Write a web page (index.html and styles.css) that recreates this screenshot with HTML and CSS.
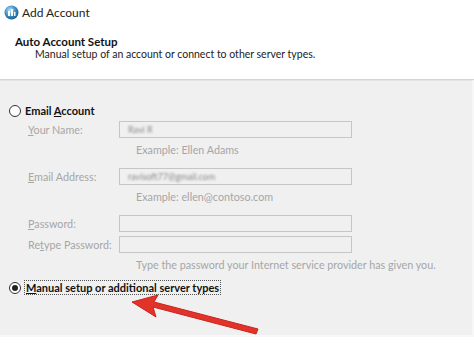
FILE: index.html
```html
<!DOCTYPE html>
<html lang="en">
<head>
    <meta charset="UTF-8">
    <title>Add Account</title>
    <link rel="stylesheet" href="styles.css">
</head>
<body>
    <div class="window">
        <!-- Title + header -->
        <div class="header">
            <div class="title">
                <svg class="app-icon" width="15" height="15" viewBox="0 0 15 15">
                    <defs>
                        <radialGradient id="g" cx="40%" cy="35%" r="65%">
                            <stop offset="0" stop-color="#bfe3f5"/>
                            <stop offset="0.6" stop-color="#3b8fc4"/>
                            <stop offset="1" stop-color="#1d5f8f"/>
                        </radialGradient>
                    </defs>
                    <circle cx="7.5" cy="7.5" r="7" fill="url(#g)"/>
                    <rect x="4" y="6" width="2" height="5" fill="#fff"/>
                    <rect x="7" y="4" width="2" height="7" fill="#fff"/>
                    <rect x="10" y="7" width="1.5" height="4" fill="#e9f4fb"/>
                </svg>
                <span>Add Account</span>
            </div>
            <div class="setup-title">Auto Account Setup</div>
            <div class="setup-desc">Manual setup of an account or connect to other server types.</div>
        </div>

        <div class="content">
            <label class="radio-row">
                <span class="radio"></span>
                <span class="radio-label">Email <u>A</u>ccount</span>
            </label>

            <div class="form">
                <span class="field-label"><u>Y</u>our Name:</span>
                <div class="input"><span class="blurred">Ravi R</span></div>
                <span></span>
                <span class="hint">Example: Ellen Adams</span>

                <span class="field-label field-gap"><u>E</u>mail Address:</span>
                <div class="input field-gap"><span class="blurred">ravisoft77@gmail.com</span></div>
                <span></span>
                <span class="hint">Example: ellen@contoso.com</span>

                <span class="field-label field-gap"><u>P</u>assword:</span>
                <div class="input field-gap"></div>
                <span class="field-label retype">Re<u>t</u>ype Password:</span>
                <div class="input retype"></div>
                <span></span>
                <span class="hint">Type the password your Internet service provider has given you.</span>
            </div>

            <label class="radio-row manual-row">
                <span class="radio checked"></span>
                <span class="radio-label focused"><u>M</u>anual setup or additional server types</span>
            </label>
        </div>

        <!-- annotation arrow -->
        <svg class="arrow" width="474" height="344" viewBox="0 0 474 344">
            <path d="M256 334 L153 307 L156 317 L132 302 L158 295 L154 302 L258 329 Z" fill="#e2332b" stroke="#c9241d" stroke-width="1" stroke-linejoin="round"/>
        </svg>
    </div>
</body>
</html>
```

FILE: styles.css
```css
body {
    margin: 0;
    font-family: "Lato", "Noto Sans", sans-serif;
    background-color: #fff;
}
.window {
    position: relative;
    width: 474px;
    height: 344px;
    overflow: hidden;
    background-color: #fff;
}
.header {
    height: 80px;
    background-color: #fff;
    border-bottom: 1px solid #d4d4d4;
    box-sizing: border-box;
}
.title {
    display: flex;
    align-items: center;
    gap: 3px;
    padding: 4px 0 0 4px;
    font-size: 12px;
    color: #222;
    height: 17px;
}
.setup-title {
    margin: 14px 0 0 15px;
    font-size: 11.5px;
    font-weight: bold;
    color: #111;
}
.setup-desc {
    margin: 0 0 0 35px;
    font-size: 10.5px;
    color: #222;
}
.content {
    height: 257px;
    background-color: #f0f0f0;
    border-top: 1px solid #e4e4e4;
    border-right: 2px solid #f7f7f7;
    border-bottom: 2px solid #f8f8f8;
    padding: 23px 0 0 9px;
    box-sizing: border-box;
}
.radio-row {
    display: flex;
    align-items: center;
    gap: 4px;
}
.radio {
    width: 10px;
    height: 10px;
    border: 1px solid #333;
    border-radius: 50%;
    background-color: #fff;
    position: relative;
}
.radio.checked::after {
    content: "";
    position: absolute;
    left: 2px;
    top: 2px;
    width: 6px;
    height: 6px;
    border-radius: 50%;
    background-color: #222;
}
.radio-label {
    font-size: 11px;
    font-weight: bold;
    color: #111;
}
.focused {
    outline: 1px dotted #555;
    padding: 0 1px;
}
.form {
    display: grid;
    grid-template-columns: 91px 233px;
    align-items: center;
    margin: 3px 0 0 19px;
    font-size: 10.75px;
    color: #a6a6a6;
}
.field-label {
    height: 17px;
    line-height: 17px;
    white-space: nowrap;
}
.input {
    height: 15px;
    border: 1px solid #c6c6c6;
    background-color: #f0f0f0;
    margin: 1px 0;
    display: flex;
    align-items: center;
    padding-left: 8px;
}
.blurred {
    color: #888;
    font-size: 9px;
    filter: blur(1.2px);
}
.hint {
    padding-left: 17px;
    line-height: 21px;
    height: 21px;
    white-space: nowrap;
}
.field-gap {
    margin-top: 7px;
}
.input.field-gap {
    margin-top: 8px;
}
.retype {
    margin-top: 2px;
}
.input.retype {
    margin-top: 3px;
}
.manual-row {
    margin-top: 6px;
}
.arrow {
    position: absolute;
    left: 0;
    top: 0;
}
```
